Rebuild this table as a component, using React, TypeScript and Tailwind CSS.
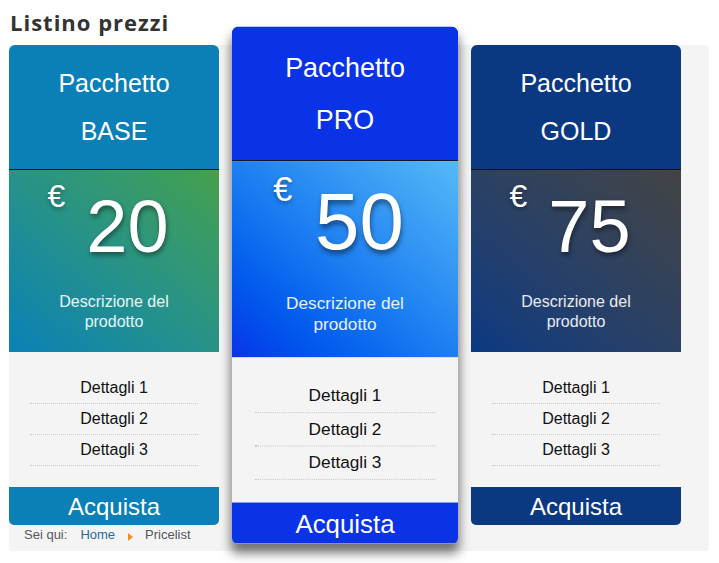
import React from "react";

type Plan = {
  name: string;
  price: string;
  head: string;
  grad: string;
  featured?: boolean;
};

const PLANS: Plan[] = [
  { name: "BASE", price: "20", head: "bg-[#0a80b6]", grad: "from-[#0a80b6] to-[#44a049]" },
  { name: "PRO", price: "50", head: "bg-[#0a33e8]", grad: "from-[#0a33e8] to-[#55b9f6]", featured: true },
  { name: "GOLD", price: "75", head: "bg-[#0a3982]", grad: "from-[#0a3982] to-[#434343]" },
];

const DETAILS = ["Dettagli 1", "Dettagli 2", "Dettagli 3"];

function PriceCard({ plan }: { plan: Plan }) {
  return (
    <div
      className={
        "flex w-[210px] shrink-0 flex-col overflow-hidden rounded-t-[6px] rounded-b-[5px] bg-[#f4f4f4] " +
        (plan.featured ? "relative z-10 scale-[1.077] shadow-[0_8px_10px_rgba(0,0,0,0.55)]" : "")
      }
    >
      {/* header */}
      <div className={"border-b border-[#141414] py-[14px] text-center text-[25px] leading-[48px] text-white " + plan.head}>
        <div>Pacchetto</div>
        <div>{plan.name}</div>
      </div>

      {/* price */}
      <div className={"h-[182px] bg-linear-to-tr pt-[10px] text-white " + plan.grad}>
        <div className="flex items-start justify-center pr-[12px]">
          <span className="text-[32px] leading-[32px] [text-shadow:0_2px_4px_rgba(0,0,0,0.35)]">€</span>
          <span className="ml-[21px] mt-[10px] text-[74px] leading-[74px] [text-shadow:1px_3px_5px_rgba(0,0,0,0.45)]">
            {plan.price}
          </span>
        </div>
        <p className="mt-[28px] text-center text-[16px] leading-[20px] text-white/90">
          Descrizione del
          <br />
          prodotto
        </p>
      </div>

      {/* details */}
      <ul className="pt-[21px] pb-[21px]">
        {DETAILS.map((d) => (
          <li
            key={d}
            className="mx-[21px] border-b border-dotted border-[#c8c8c8] text-center text-[16px] leading-[30px] text-[#111]"
          >
            {d}
          </li>
        ))}
      </ul>

      <button type="button" className={"h-[38px] text-center text-[24px] leading-[40px] text-white " + plan.head}>
        Acquista
      </button>
    </div>
  );
}

export default function App() {
  return (
    <div className="h-[563px] w-[719px] overflow-hidden bg-white font-['Liberation_Sans',Arial,sans-serif]">
      <h1 className="pl-[10px] pt-[7px] font-['Open_Sans',sans-serif] text-[22px] leading-[30px] font-bold tracking-[1px] text-[#333]">
        Listino prezzi
      </h1>

      <div className="ml-[9px] mt-[8px] w-[700px] rounded-[4px] bg-[#f4f4f4]">
        <div className="flex items-start gap-[21px]">
          {PLANS.map((p) => (
            <PriceCard key={p.name} plan={p} />
          ))}
        </div>

        {/* breadcrumb */}
        <div className="flex items-center pb-[7px] pl-[15px] pt-[1px] text-[13px] leading-[18px] text-[#555]">
          <span>Sei qui:</span>
          <a className="ml-[13px] text-[#1f6a9c]">Home</a>
          <svg width="5" height="8" viewBox="0 0 5 8" className="ml-[13px] mt-[3px]">
            <path d="M0 0 L5 4 L0 8 Z" fill="#f39019" />
          </svg>
          <span className="ml-[12px]">Pricelist</span>
        </div>
      </div>
    </div>
  );
}
